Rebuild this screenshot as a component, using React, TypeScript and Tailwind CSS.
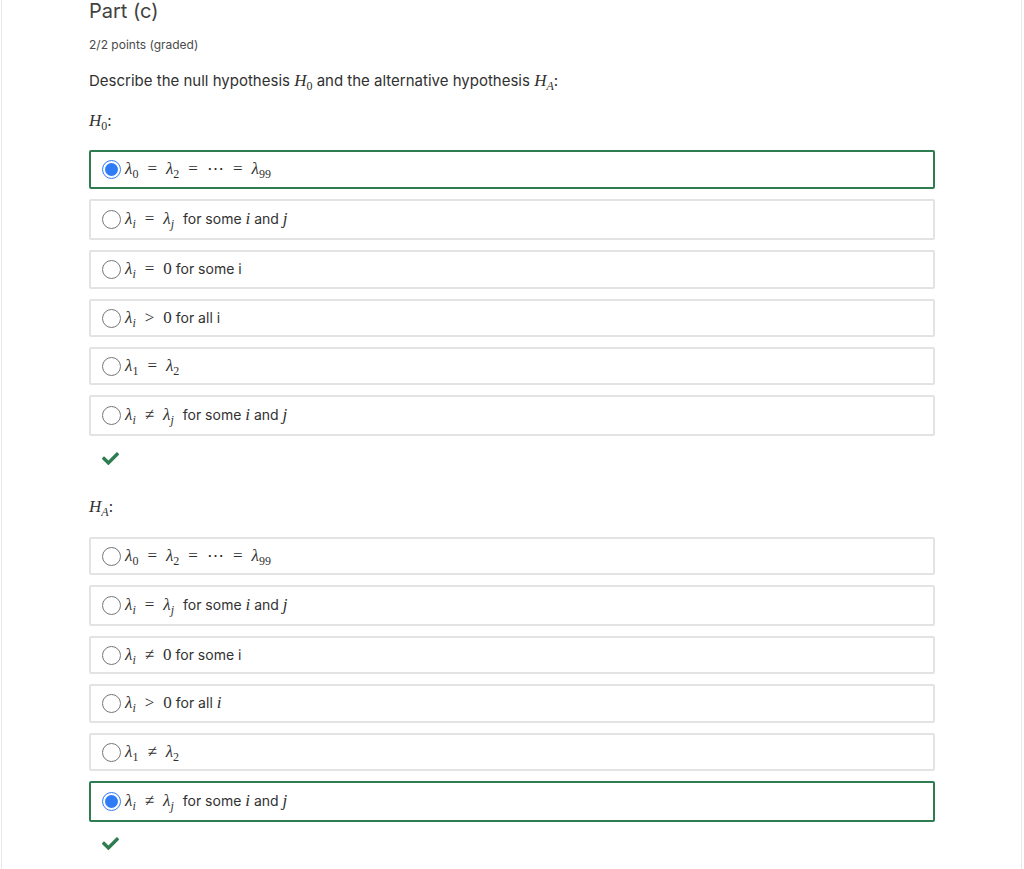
import React from "react";

const serif = "font-['Liberation_Serif','DejaVu_Serif',serif]";

function Lam({ sub, italicSub, tail }: { sub: string; italicSub?: boolean; tail?: boolean }) {
  return (
    <span className={`${serif} text-[17px] whitespace-nowrap ${tail ? "mr-[5px]" : ""}`}>
      <span className="italic">λ</span>
      <span className={`text-[12px] align-[-4px] ${italicSub ? "italic" : ""}`}>{sub}</span>
    </span>
  );
}

function Op({ c }: { c: string }) {
  return <span className={`${serif} text-[17px] mx-[9px]`}>{c}</span>;
}

function Zero() {
  return <span className={`${serif} text-[17px]`}>0</span>;
}

function MI({ c }: { c: string }) {
  return <span className={`${serif} italic text-[17px]`}>{c}</span>;
}

function Sans({ t }: { t: string }) {
  return <span className="text-[14px] whitespace-pre">{t}</span>;
}

function Radio({ checked }: { checked: boolean }) {
  if (checked) {
    return (
      <div className="w-[19px] h-[19px] rounded-full border border-[#2f7bf5] flex items-center justify-center shrink-0">
        <div className="w-[13px] h-[13px] rounded-full bg-[#2f7bf5]" />
      </div>
    );
  }
  return <div className="w-[19px] h-[19px] rounded-full border border-[#777] bg-white shrink-0" />;
}

function Option({ checked, h, children }: { checked?: boolean; h: string; children: React.ReactNode }) {
  return (
    <div
      className={`${h} flex items-center pl-[11px] rounded-[2px] border-2 ${
        checked ? "border-[#2e7d50]" : "border-[#e3e3e3]"
      }`}
    >
      <Radio checked={!!checked} />
      <div className="ml-[4px] flex items-baseline text-[#313131]">{children}</div>
    </div>
  );
}

function Check() {
  return (
    <svg width="17" height="13" viewBox="0 0 512 390" className="ml-[13px]">
      <path
        fill="#2e7d50"
        d="M173.9 382.6L7.5 216.2c-10-10-10-26.2 0-36.2l36.2-36.2c10-10 26.2-10 36.2 0L192 255.9 432.1 15.8c10-10 26.2-10 36.2 0l36.2 36.2c10 10 10 26.2 0 36.2L210.1 382.6c-10 10-26.2 10-36.2 0z"
      />
    </svg>
  );
}

function Ha() {
  return (
    <span className={`${serif} whitespace-nowrap`}>
      <span className="italic text-[17px]">H</span>
      <span className="italic text-[12px] align-[-4px]">A</span>
    </span>
  );
}
function H0() {
  return (
    <span className={`${serif} whitespace-nowrap`}>
      <span className="italic text-[17px]">H</span>
      <span className="text-[12px] align-[-4px]">0</span>
    </span>
  );
}

export default function App() {
  return (
    <div className="w-[1024px] min-h-[869px] bg-white font-['Inter','Liberation_Sans',sans-serif] text-[#414141]">
      <div className="ml-px w-[1021px] min-h-[869px] border-x border-[#e8e8e8] pl-[87px] pr-[86px]">
        <div className="text-[20px] leading-[22px] text-[#414141]">Part (c)</div>
        <div className="mt-[15px] text-[12px] leading-[16px] text-[#4a4a4a]">2/2 points (graded)</div>
        <div className="mt-[18px] text-[15px] leading-[20px] text-[#313131] flex items-baseline">
          <span>Describe the null hypothesis&nbsp;</span>
          <H0 />
          <span>&nbsp;and the alternative hypothesis&nbsp;</span>
          <Ha />
          <span>:</span>
        </div>
        <div className="mt-[15px] text-[15px] leading-[20px] text-[#313131] flex items-baseline">
          <H0 />
          <span>:</span>
        </div>

        <div className="mt-[14px] flex flex-col gap-[10px]">
          <Option checked h="h-[39px]">
            <Lam sub="0" />
            <Op c="=" />
            <Lam sub="2" />
            <Op c="=" />
            <span className={`${serif} text-[17px]`}>⋯</span>
            <Op c="=" />
            <Lam sub="99" />
          </Option>
          <Option h="h-[41px]">
            <Lam sub="i" italicSub />
            <Op c="=" />
            <Lam sub="j" italicSub tail />
            <Sans t=" for some " />
            <MI c="i" />
            <Sans t=" and " />
            <MI c="j" />
          </Option>
          <Option h="h-[39px]">
            <Lam sub="i" italicSub />
            <Op c="=" />
            <Zero />
            <Sans t=" for some i" />
          </Option>
          <Option h="h-[38px]">
            <Lam sub="i" italicSub />
            <Op c=">" />
            <Zero />
            <Sans t=" for all i" />
          </Option>
          <Option h="h-[38px]">
            <Lam sub="1" />
            <Op c="=" />
            <Lam sub="2" />
          </Option>
          <Option h="h-[41px]">
            <Lam sub="i" italicSub />
            <Op c="≠" />
            <Lam sub="j" italicSub tail />
            <Sans t=" for some " />
            <MI c="i" />
            <Sans t=" and " />
            <MI c="j" />
          </Option>
        </div>
        <div className="mt-[16px] h-[13px] flex items-center">
          <Check />
        </div>

        <div className="mt-[32px] text-[15px] leading-[20px] text-[#313131] flex items-baseline">
          <Ha />
          <span>:</span>
        </div>

        <div className="mt-[15px] flex flex-col gap-[10px]">
          <Option h="h-[38px]">
            <Lam sub="0" />
            <Op c="=" />
            <Lam sub="2" />
            <Op c="=" />
            <span className={`${serif} text-[17px]`}>⋯</span>
            <Op c="=" />
            <Lam sub="99" />
          </Option>
          <Option h="h-[41px]">
            <Lam sub="i" italicSub />
            <Op c="=" />
            <Lam sub="j" italicSub tail />
            <Sans t=" for some " />
            <MI c="i" />
            <Sans t=" and " />
            <MI c="j" />
          </Option>
          <Option h="h-[38px]">
            <Lam sub="i" italicSub />
            <Op c="≠" />
            <Zero />
            <Sans t=" for some i" />
          </Option>
          <Option h="h-[39px]">
            <Lam sub="i" italicSub />
            <Op c=">" />
            <Zero />
            <Sans t=" for all " />
            <MI c="i" />
          </Option>
          <Option h="h-[38px]">
            <Lam sub="1" />
            <Op c="≠" />
            <Lam sub="2" />
          </Option>
          <Option checked h="h-[41px]">
            <Lam sub="i" italicSub />
            <Op c="≠" />
            <Lam sub="j" italicSub tail />
            <Sans t=" for some " />
            <MI c="i" />
            <Sans t=" and " />
            <MI c="j" />
          </Option>
        </div>
        <div className="mt-[15px] h-[13px] flex items-center">
          <Check />
        </div>
      </div>
    </div>
  );
}
